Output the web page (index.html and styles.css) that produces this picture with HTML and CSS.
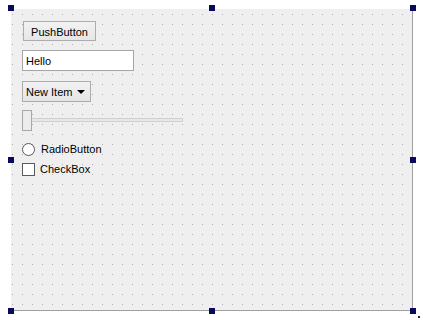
FILE: index.html
```html
<!DOCTYPE html>
<html>
<head>
<meta charset="utf-8">
<link rel="stylesheet" href="styles.css">
</head>
<body>
<div class="stage">
  <div class="form">
    <div class="widgets">
      <button class="push">PushButton</button>
      <div class="lineedit">Hello</div>
      <div class="combo"><span>New Item</span><i class="arrow"></i></div>
      <div class="slider"><div class="groove"></div><div class="knob"></div></div>
      <label class="radio"><span class="circle"></span>RadioButton</label>
      <label class="check"><span class="box"></span>CheckBox</label>
    </div>
  </div>
  <span class="h h-tl"></span>
  <span class="h h-tm"></span>
  <span class="h h-tr"></span>
  <span class="h h-ml"></span>
  <span class="h h-mr"></span>
  <span class="h h-bl"></span>
  <span class="h h-bm"></span>
  <span class="h h-br"></span>
  <span class="grip"></span>
</div>
</body>
</html>
```
FILE: styles.css
```css
html, body {
  margin: 0;
  padding: 0;
  background: #ffffff;
  font-family: "Liberation Sans", Arial, sans-serif;
  font-size: 11px;
  color: #000;
}
.stage {
  position: relative;
  width: 423px;
  height: 320px;
  padding: 9px 0 0 11px;
  box-sizing: border-box;
}
.form {
  width: 402px;
  height: 302px;
  box-sizing: border-box;
  background-color: #efefef;
  background-image: url("data:image/svg+xml,%3Csvg xmlns='http://www.w3.org/2000/svg' width='10' height='10'%3E%3Crect x='0' y='0' width='1' height='1' fill='%23b0b0b0'/%3E%3C/svg%3E");
  background-position: 1px 5px;
  border-right: 1px solid #a0a0a0;
  border-bottom: 1px solid #a0a0a0;
  padding: 12px 0 0 11px;
}
.widgets {
  display: flex;
  flex-direction: column;
  align-items: flex-start;
}
.push {
  margin: 0 0 0 1px;
  width: 73px;
  height: 20px;
  padding: 1px 0 0;
  border: 1px solid #adadad;
  background: linear-gradient(#f2f2f2, #e6e6e6);
  font: inherit;
  color: #000;
}
.lineedit {
  margin-top: 9px;
  width: 112px;
  height: 21px;
  box-sizing: border-box;
  border: 1px solid #a5a5a5;
  background: #fff;
  padding: 0 0 0 3px;
  line-height: 20px;
}
.combo {
  margin-top: 10px;
  width: 69px;
  height: 21px;
  box-sizing: border-box;
  border: 1px solid #acacac;
  background: linear-gradient(#f2f2f2, #e5e5e5);
  display: flex;
  align-items: center;
  padding: 1px 0 0 3px;
}
.combo span { flex: 1; }
.arrow {
  width: 0;
  height: 0;
  border-left: 4px solid transparent;
  border-right: 4px solid transparent;
  border-top: 4px solid #000;
  margin-right: 5px;
}
.slider {
  margin-top: 8px;
  width: 161px;
  height: 21px;
  display: flex;
  align-items: center;
  position: relative;
}
.groove {
  position: absolute;
  left: 0;
  right: 0;
  top: 8px;
  height: 4px;
  box-sizing: border-box;
  border: 1px solid #d0d0d0;
  background: #e8e8e8;
}
.knob {
  position: relative;
  width: 10px;
  height: 21px;
  box-sizing: border-box;
  border: 1px solid #a8a8a8;
  background: #ececec;
}
.radio, .check {
  display: flex;
  align-items: center;
  height: 14px;
}
.radio { margin-top: 11px; }
.check { margin-top: 6px; }
.circle {
  width: 13px;
  height: 13px;
  box-sizing: border-box;
  border: 1px solid #5a5a5a;
  border-radius: 50%;
  background: #fff;
  margin-right: 6px;
}
.box {
  width: 13px;
  height: 13px;
  box-sizing: border-box;
  border: 1px solid #5a5a5a;
  background: #fff;
  margin-right: 5px;
}
.h {
  position: absolute;
  width: 6px;
  height: 6px;
  background: #0a0a5c;
}
.h-tl { left: 8px; top: 5px; }
.h-tm { left: 209px; top: 5px; }
.h-tr { left: 410px; top: 5px; }
.h-ml { left: 8px; top: 157px; }
.h-mr { left: 410px; top: 157px; }
.h-bl { left: 8px; top: 308px; }
.h-bm { left: 209px; top: 308px; }
.h-br { left: 410px; top: 308px; }
.grip {
  position: absolute;
  left: 418px;
  top: 316px;
  width: 2px;
  height: 2px;
  background: #222;
}
```
